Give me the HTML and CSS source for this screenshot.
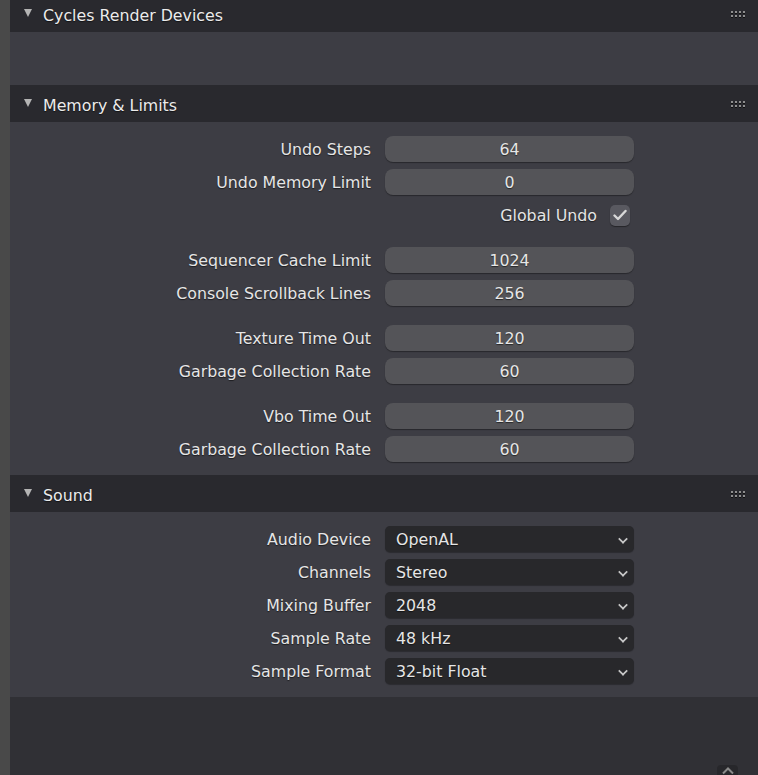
FILE: index.html
```html
<!DOCTYPE html>
<html lang="en">
<head>
    <meta charset="UTF-8" />
    <meta name="viewport" content="width=device-width, initial-scale=1" />
    <title>Preferences - System</title>
    <link rel="stylesheet" href="styles.css">
</head>
<body>
    <div class="app">
        <div class="strip"></div>
        <div class="main">

            <div class="panel panel-first">
                <div class="panel-header">
                    <span class="arrow"></span>
                    <span class="panel-title">Cycles Render Devices</span>
                    <svg class="grip" width="14" height="8" viewBox="0 0 14 8">
                        <g fill="#111">
                            <rect x="0" y="1" width="2" height="2"/><rect x="4" y="1" width="2" height="2"/><rect x="8" y="1" width="2" height="2"/><rect x="12" y="1" width="2" height="2"/>
                            <rect x="0" y="5" width="2" height="2"/><rect x="4" y="5" width="2" height="2"/><rect x="8" y="5" width="2" height="2"/><rect x="12" y="5" width="2" height="2"/>
                        </g>
                        <g fill="#8e8e8e">
                            <rect x="0" y="0" width="2" height="2"/><rect x="4" y="0" width="2" height="2"/><rect x="8" y="0" width="2" height="2"/><rect x="12" y="0" width="2" height="2"/>
                            <rect x="0" y="4" width="2" height="2"/><rect x="4" y="4" width="2" height="2"/><rect x="8" y="4" width="2" height="2"/><rect x="12" y="4" width="2" height="2"/>
                        </g>
                    </svg>
                </div>
                <div class="panel-body empty"></div>
            </div>

            <div class="panel">
                <div class="panel-header">
                    <span class="arrow"></span>
                    <span class="panel-title">Memory &amp; Limits</span>
                    <svg class="grip" width="14" height="8" viewBox="0 0 14 8">
                        <g fill="#111">
                            <rect x="0" y="1" width="2" height="2"/><rect x="4" y="1" width="2" height="2"/><rect x="8" y="1" width="2" height="2"/><rect x="12" y="1" width="2" height="2"/>
                            <rect x="0" y="5" width="2" height="2"/><rect x="4" y="5" width="2" height="2"/><rect x="8" y="5" width="2" height="2"/><rect x="12" y="5" width="2" height="2"/>
                        </g>
                        <g fill="#8e8e8e">
                            <rect x="0" y="0" width="2" height="2"/><rect x="4" y="0" width="2" height="2"/><rect x="8" y="0" width="2" height="2"/><rect x="12" y="0" width="2" height="2"/>
                            <rect x="0" y="4" width="2" height="2"/><rect x="4" y="4" width="2" height="2"/><rect x="8" y="4" width="2" height="2"/><rect x="12" y="4" width="2" height="2"/>
                        </g>
                    </svg>
                </div>
                <div class="panel-body">
                    <div class="group">
                        <div class="row">
                            <label>Undo Steps</label>
                            <div class="num-field">64</div>
                        </div>
                        <div class="row">
                            <label>Undo Memory Limit</label>
                            <div class="num-field">0</div>
                        </div>
                        <div class="row">
                            <span></span>
                            <div class="check-row">
                                <span>Global Undo</span>
                                <span class="checkbox">
                                    <svg width="14" height="12" viewBox="0 0 14 12"><path d="M1.5 6.5 L5 10 L12.5 2" fill="none" stroke="#d8d8d8" stroke-width="2.4" stroke-linecap="round" stroke-linejoin="round"/></svg>
                                </span>
                            </div>
                        </div>
                    </div>
                    <div class="group">
                        <div class="row">
                            <label>Sequencer Cache Limit</label>
                            <div class="num-field">1024</div>
                        </div>
                        <div class="row">
                            <label>Console Scrollback Lines</label>
                            <div class="num-field">256</div>
                        </div>
                    </div>
                    <div class="group">
                        <div class="row">
                            <label>Texture Time Out</label>
                            <div class="num-field">120</div>
                        </div>
                        <div class="row">
                            <label>Garbage Collection Rate</label>
                            <div class="num-field">60</div>
                        </div>
                    </div>
                    <div class="group">
                        <div class="row">
                            <label>Vbo Time Out</label>
                            <div class="num-field">120</div>
                        </div>
                        <div class="row">
                            <label>Garbage Collection Rate</label>
                            <div class="num-field">60</div>
                        </div>
                    </div>
                </div>
            </div>

            <div class="panel">
                <div class="panel-header">
                    <span class="arrow"></span>
                    <span class="panel-title">Sound</span>
                    <svg class="grip" width="14" height="8" viewBox="0 0 14 8">
                        <g fill="#111">
                            <rect x="0" y="1" width="2" height="2"/><rect x="4" y="1" width="2" height="2"/><rect x="8" y="1" width="2" height="2"/><rect x="12" y="1" width="2" height="2"/>
                            <rect x="0" y="5" width="2" height="2"/><rect x="4" y="5" width="2" height="2"/><rect x="8" y="5" width="2" height="2"/><rect x="12" y="5" width="2" height="2"/>
                        </g>
                        <g fill="#8e8e8e">
                            <rect x="0" y="0" width="2" height="2"/><rect x="4" y="0" width="2" height="2"/><rect x="8" y="0" width="2" height="2"/><rect x="12" y="0" width="2" height="2"/>
                            <rect x="0" y="4" width="2" height="2"/><rect x="4" y="4" width="2" height="2"/><rect x="8" y="4" width="2" height="2"/><rect x="12" y="4" width="2" height="2"/>
                        </g>
                    </svg>
                </div>
                <div class="panel-body">
                    <div class="group">
                        <div class="row">
                            <label>Audio Device</label>
                            <div class="menu-field">OpenAL<span class="chevron"></span></div>
                        </div>
                        <div class="row">
                            <label>Channels</label>
                            <div class="menu-field">Stereo<span class="chevron"></span></div>
                        </div>
                        <div class="row">
                            <label>Mixing Buffer</label>
                            <div class="menu-field">2048<span class="chevron"></span></div>
                        </div>
                        <div class="row">
                            <label>Sample Rate</label>
                            <div class="menu-field">48 kHz<span class="chevron"></span></div>
                        </div>
                        <div class="row">
                            <label>Sample Format</label>
                            <div class="menu-field">32-bit Float<span class="chevron"></span></div>
                        </div>
                    </div>
                </div>
            </div>

            <div class="scroll-tab">
                <svg width="14" height="9" viewBox="0 0 14 9"><path d="M2 7.5 L7 2.5 L12 7.5" fill="none" stroke="#8a8a8a" stroke-width="2"/></svg>
            </div>
        </div>
    </div>
</body>
</html>
```

FILE: styles.css
```css
html, body {
    margin: 0;
    padding: 0;
    height: 100%;
    overflow: hidden;
}

body {
    background-color: #303035;
    font-family: "DejaVu Sans", "Liberation Sans", sans-serif;
    font-size: 15.8px;
    color: #e6e6e6;
    text-shadow: 0 1px 1px rgba(0, 0, 0, 0.55);
}

.app {
    display: flex;
    height: 100%;
}

.strip {
    width: 10px;
    flex-shrink: 0;
    background-color: #494949;
}

.main {
    flex: 1;
    position: relative;
}

.panel-first {
    margin-top: -5px;
}

.panel-header {
    height: 37px;
    background-color: #29292e;
    display: flex;
    align-items: center;
    padding-top: 4px;
    box-sizing: border-box;
}

.arrow {
    width: 0;
    height: 0;
    margin-left: 14px;
    margin-right: 11px;
    border-left: 4px solid transparent;
    border-right: 4px solid transparent;
    border-top: 8px solid #b4b4b4;
    margin-top: -5px;
}

.panel-title {
    flex: 1;
    color: #ececec;
}

.grip {
    margin-right: 13px;
    margin-top: -1px;
}

.panel-body {
    background-color: #3d3d44;
    padding: 14px 0 13px 0;
}

.panel-body.empty {
    height: 53px;
    padding: 0;
}

.group {
    display: flex;
    flex-direction: column;
    gap: 7px;
}

.group + .group {
    margin-top: 19px;
}

.row {
    display: grid;
    grid-template-columns: 361px 249px;
    column-gap: 14px;
    height: 26px;
    align-items: center;
}

label {
    text-align: right;
    white-space: nowrap;
}

.num-field {
    height: 26px;
    line-height: 28px;
    background-color: #545458;
    border-radius: 8px;
    text-align: center;
    box-shadow: 0 1px 1px rgba(0, 0, 0, 0.35);
}

.menu-field {
    height: 26px;
    line-height: 28px;
    background-color: #28282b;
    border-radius: 5px;
    padding-left: 11px;
    position: relative;
    box-shadow: 0 1px 1px rgba(0, 0, 0, 0.3);
}

.chevron {
    position: absolute;
    right: 7px;
    top: 9px;
    width: 6px;
    height: 6px;
    border-right: 2px solid #c8c8c8;
    border-bottom: 2px solid #c8c8c8;
    transform: rotate(45deg) scale(0.85);
}

.check-row {
    display: flex;
    justify-content: flex-end;
    align-items: center;
    gap: 13px;
    padding-right: 4px;
}

.checkbox {
    width: 20px;
    height: 21px;
    border-radius: 5px;
    background-color: #595960;
    display: flex;
    align-items: center;
    justify-content: center;
    box-shadow: 0 1px 1px rgba(0, 0, 0, 0.4);
}

.scroll-tab {
    position: absolute;
    left: 707px;
    bottom: -6px;
    width: 21px;
    height: 16px;
    background-color: #27272b;
    border-radius: 4px 4px 0 0;
    display: flex;
    justify-content: center;
    padding-top: 1px;
    box-sizing: border-box;
}
```
